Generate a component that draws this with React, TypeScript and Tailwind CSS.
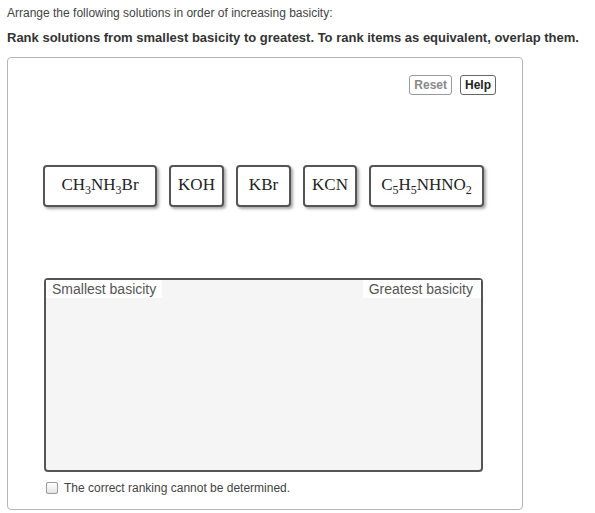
import React from "react";

const Sub = ({ children }: { children: React.ReactNode }) => (
  <span className="text-[12px] relative top-[4px] leading-none">{children}</span>
);

const tiles: { w: string; node: React.ReactNode }[] = [
  { w: "w-[114px]", node: <>CH<Sub>3</Sub>NH<Sub>3</Sub>Br</> },
  { w: "w-[55px]", node: <>KOH</> },
  { w: "w-[55px]", node: <>KBr</> },
  { w: "w-[54px]", node: <>KCN</> },
  { w: "w-[115px]", node: <>C<Sub>5</Sub>H<Sub>5</Sub>NHNO<Sub>2</Sub></> },
];

export default function App() {
  return (
    <div className="w-[595px] h-[513px] bg-white font-['Liberation_Sans',Arial,sans-serif] text-[#333] overflow-hidden">
      <div className="pl-[7px] pt-[6px] text-[12px] leading-[14px] text-[#444]">
        Arrange the following solutions in order of increasing basicity:
      </div>
      <div className="pl-[7px] pt-[10px] text-[13px] leading-[15px] font-bold text-[#333]">
        Rank solutions from smallest basicity to greatest. To rank items as equivalent, overlap them.
      </div>
      <div className="ml-[7px] mt-[12px] w-[516px] h-[453px] border border-[#b5b5b5] rounded-[4px] flex flex-col">
        <div className="flex justify-end gap-[8px] pr-[26px] pt-[17px]">
          <button className="h-[20px] px-[4px] border border-[#999] rounded-[3px] text-[12px] font-bold text-[#888] bg-white leading-none">
            Reset
          </button>
          <button className="h-[20px] px-[4px] border border-[#666] rounded-[3px] text-[12px] font-bold text-[#222] bg-white leading-none">
            Help
          </button>
        </div>
        <div className="flex gap-[12px] pl-[35px] mt-[70px]">
          {tiles.map((t, i) => (
            <div
              key={i}
              className={`${t.w} h-[42px] flex items-center justify-center border-2 border-[#555] rounded-[4px] bg-white shadow-[2px_2px_3px_rgba(0,0,0,0.35)] font-['Liberation_Serif','Times_New_Roman',serif] text-[17px] text-[#222] whitespace-nowrap`}
            >
              <span className="relative -top-[1px]">{t.node}</span>
            </div>
          ))}
        </div>
        <div className="ml-[36px] mt-[71px] w-[439px] h-[194px] border-2 border-[#555] rounded-[4px] bg-[#f5f5f5] flex justify-between items-start">
          <span className="bg-white text-[14px] leading-[17px] text-[#555] px-[6px] pt-[1px]">Smallest basicity</span>
          <span className="bg-white text-[14px] leading-[17px] text-[#555] pl-[6px] pr-[8px] pt-[1px]">Greatest basicity</span>
        </div>
        <div className="flex items-center ml-[38px] mt-[9px] gap-[6px]">
          <span className="w-[12px] h-[12px] border border-[#999] rounded-[2px] bg-gradient-to-b from-white to-[#e5e5e5]" />
          <span className="text-[12px] leading-[14px] text-[#444]">The correct ranking cannot be determined.</span>
        </div>
      </div>
    </div>
  );
}
